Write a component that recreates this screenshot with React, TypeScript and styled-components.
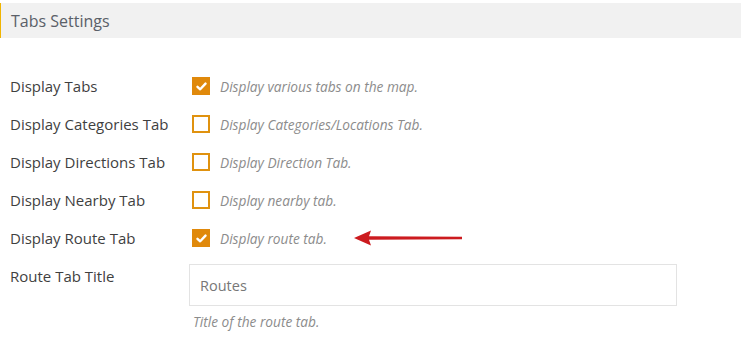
import React from "react";
import styled, { createGlobalStyle } from "styled-components";

const Global = createGlobalStyle`
  html, body { margin: 0; padding: 0; background: #fff; }
  body { font-family: "Open Sans", "Noto Sans", sans-serif; }
  * { box-sizing: border-box; }
`;

const Page = styled.div`
  padding-top: 3px;
  width: 741px;
`;

const Header = styled.div`
  height: 35px;
  background: #f1f1f1;
  border-left: 1px solid #f0b400;
  display: flex;
  align-items: center;
  padding-left: 10px;
  font-size: 16px;
  color: #5a6068;
`;

const Form = styled.div`
  padding: 29px 0 0 10px;
  display: flex;
  flex-direction: column;
`;

const Row = styled.div`
  position: relative;
  display: grid;
  grid-template-columns: 179px 1fr;
  align-items: start;
`;

const Label = styled.div`
  font-size: 15px;
  line-height: 38px;
  color: #3f3f3f;
  white-space: nowrap;
`;

const Field = styled.div`
  display: flex;
  align-items: center;
  min-height: 38px;
`;

const FieldCol = styled.div`
  display: flex;
  flex-direction: column;
  padding-top: 7px;
`;

const Box = styled.span<{ $checked: boolean }>`
  width: 18px;
  height: 18px;
  margin-left: 3px;
  margin-right: 10px;
  flex: none;
  display: inline-flex;
  align-items: center;
  justify-content: center;
  background: ${(p) => (p.$checked ? "#e0890b" : "#fff")};
  border: ${(p) => (p.$checked ? "none" : "2px solid #e0920f")};
`;

const Desc = styled.span`
  font-size: 13.7px;
  font-style: italic;
  color: #8c8c8c;
`;

const Input = styled.div`
  width: 488px;
  height: 42px;
  border: 1px solid #e3e3e3;
  display: flex;
  align-items: center;
  padding-left: 10px;
  font-size: 14.5px;
  color: #777;
`;

const Help = styled.div`
  margin-top: 6px;
  padding-left: 4px;
  font-size: 13.7px;
  font-style: italic;
  color: #8c8c8c;
`;

const Arrow = styled.svg`
  position: absolute;
  left: 344px;
  top: 11px;
`;

const Check = () => (
  <svg width="11" height="9" viewBox="0 0 11 9">
    <path d="M1.5 4.8 L4.2 7.3 L9.5 1.6" fill="none" stroke="#fff" strokeWidth="2.4" strokeLinecap="round" strokeLinejoin="round" />
  </svg>
);

const rows = [
  { label: "Display Tabs", desc: "Display various tabs on the map.", checked: true },
  { label: "Display Categories Tab", desc: "Display Categories/Locations Tab.", checked: false },
  { label: "Display Directions Tab", desc: "Display Direction Tab.", checked: false },
  { label: "Display Nearby Tab", desc: "Display nearby tab.", checked: false },
  { label: "Display Route Tab", desc: "Display route tab.", checked: true, arrow: true },
];

export default function App() {
  return (
    <Page>
      <Global />
      <Header>Tabs Settings</Header>
      <Form>
        {rows.map((r) => (
          <Row key={r.label}>
            <Label>{r.label}</Label>
            <Field>
              <Box $checked={r.checked}>{r.checked && <Check />}</Box>
              <Desc>{r.desc}</Desc>
            </Field>
            {r.arrow && (
              <Arrow width="110" height="16" viewBox="0 0 110 16">
                <path d="M0 8 L17 0.5 L15 6.2 L108 6.8 L108 9.2 L15 9.8 L17 15.5 Z" fill="#cc1b1f" />
              </Arrow>
            )}
          </Row>
        ))}
        <Row>
          <Label>Route Tab Title</Label>
          <FieldCol>
            <Input>Routes</Input>
            <Help>Title of the route tab.</Help>
          </FieldCol>
        </Row>
      </Form>
    </Page>
  );
}
